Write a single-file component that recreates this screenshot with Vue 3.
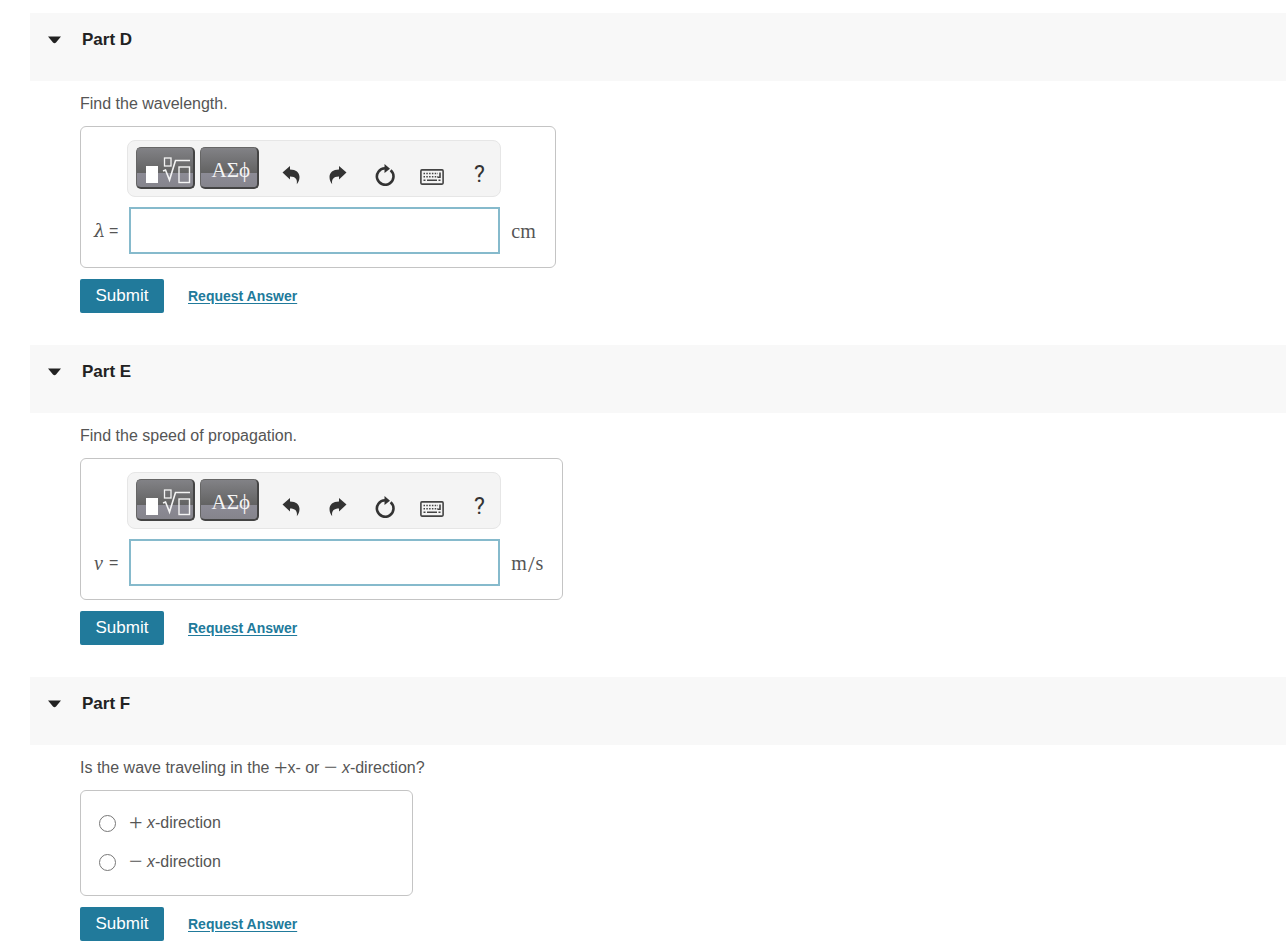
<script setup>
import { ref } from 'vue'

const parts = ref([
  { id: 'd', title: 'Part D', kind: 'math', prompt: 'Find the wavelength.', symbol: 'λ', unit: ['cm'], value: '', open: true },
  { id: 'e', title: 'Part E', kind: 'math', prompt: 'Find the speed of propagation.', symbol: 'v', unit: ['m', '/', 's'], value: '', open: true },
  { id: 'f', title: 'Part F', kind: 'choice', value: '', open: true }
])
const choices = [
  { id: 'plus', sign: '+' },
  { id: 'minus', sign: '−' }
]
</script>

<template>
  <main class="page">
    <section v-for="part in parts" :key="part.id" class="part">
      <h2 class="head">
        <button type="button" class="toggle" :aria-expanded="part.open" @click="part.open = !part.open">
          <svg class="caret" width="14" height="8" viewBox="0 0 14 8" aria-hidden="true"><path d="M0 0.500H13L8 6.600Q6.500 8 5 6.600Z" fill="#222" /></svg>
          <span>{{ part.title }}</span>
        </button>
      </h2>

      <div v-if="part.open" class="body">
        <p v-if="part.kind === 'math'" class="prompt">{{ part.prompt }}</p>
        <p v-else class="prompt">Is the wave traveling in the <span class="sign">+</span>x- or <span class="sign">−</span> <i>x</i>-direction?</p>

        <div v-if="part.kind === 'math'" class="box math">
          <div class="toolbar" role="toolbar" aria-label="Equation tools">
            <button type="button" class="key" aria-label="Templates">
              <svg width="46" height="30" viewBox="0 0 46 30" fill="none" stroke="#f4f4f4" aria-hidden="true">
                <rect x="1" y="11" width="12" height="17" fill="#fff" stroke="none" />
                <rect x="19.500" y="3" width="6.500" height="8" stroke-width="1.300" />
                <path d="M18 16L20.500 15L24.500 25L30.500 5.500H45" stroke-width="1.600" />
                <rect x="34" y="12" width="10.500" height="15.500" stroke-width="1.400" />
              </svg>
            </button>
            <button type="button" class="key greek" aria-label="Symbols">ΑΣϕ</button>
            <div class="tools">
              <button type="button" class="tool" aria-label="Undo">
                <svg width="18" height="20" viewBox="0 0 18 20" aria-hidden="true"><path d="M0.500 7.500L8 1V4.500C14 4.500 17.500 7.500 17.500 12C17.500 15 16.300 17.400 14.800 19.200C15.500 14.500 14 11.400 8 11.400V14.500Z" fill="#333" /></svg>
              </button>
              <button type="button" class="tool" aria-label="Redo">
                <svg width="18" height="20" viewBox="0 0 18 20" aria-hidden="true"><path d="M17.500 7.500L10 1V4.500C4 4.500 0.500 7.500 0.500 12C0.500 15 1.700 17.400 3.200 19.200C2.500 14.500 4 11.400 10 11.400V14.500Z" fill="#333" /></svg>
              </button>
              <button type="button" class="tool" aria-label="Reset">
                <svg width="20" height="22" viewBox="0 0 20 22" fill="none" aria-hidden="true"><path d="M15.600 6.200A8.300 8.300 0 1 1 10 4.200" stroke="#333" stroke-width="2.600" /><path d="M9.500 0L15 4.800L9.500 9Z" fill="#333" /></svg>
              </button>
              <button type="button" class="tool low" aria-label="Keyboard shortcuts">
                <svg width="24" height="16" viewBox="0 0 24 16" fill="none" stroke="#444" aria-hidden="true">
                  <rect x="0.900" y="0.900" width="22.200" height="14.200" rx="1" stroke-width="1.600" />
                  <path d="M3.500 4.500H18M3.500 7.800H18" stroke-width="1.500" stroke-dasharray="1.500 1.300" />
                  <path d="M3.500 11.300H5.500M18.500 11.300H20.500" stroke-width="1.500" />
                  <path d="M7 11.300H17M20 3.500V8.200H17.500" stroke-width="1.600" />
                </svg>
              </button>
              <button type="button" class="tool help" aria-label="Help">?</button>
            </div>
          </div>
          <label class="symbol" :for="'answer-' + part.id"><i :class="{ lambda: part.symbol === 'λ' }">{{ part.symbol }}</i><span>=</span></label>
          <input :id="'answer-' + part.id" v-model="part.value" class="answer" type="text" autocomplete="off">
          <span class="unit"><span v-for="piece in part.unit" :key="piece" :class="{ slash: piece === '/' }">{{ piece }}</span></span>
        </div>

        <div v-else class="box choices" role="radiogroup" aria-label="Direction of travel">
          <label v-for="choice in choices" :key="choice.id" class="choice">
            <input v-model="part.value" type="radio" name="direction" :value="choice.id">
            <span><span class="sign">{{ choice.sign }}</span> <i>x</i>-direction</span>
          </label>
        </div>

        <div class="actions">
          <button type="button" class="submit">Submit</button>
          <a class="request" href="#">Request Answer</a>
        </div>
      </div>
    </section>
  </main>
</template>

<style>
body { background: #fff; }
</style>

<style scoped>
.page {
  padding: 13px 0 4px 30px;
  font: 16px/20px "Liberation Sans", Arial, sans-serif;
  color: #555;
}
.page *, .page { box-sizing: border-box; }
.part { margin-bottom: 32px; }
.part:last-child { margin-bottom: 0; }
.head { margin: 0; height: 68px; padding: 17px 18px; background: #f8f8f8; font-size: 17px; line-height: 20px; }
.toggle {
  display: flex; align-items: center; gap: 20px; padding: 0; border: 0;
  background: none; color: #222; font: inherit; cursor: pointer;
}
.body { padding: 13px 20px 0 50px; }
.prompt { margin: 0 0 12px; line-height: 20px; height: 20px; }
.sign { font-family: "Liberation Serif", serif; font-size: 24px; line-height: 16px; vertical-align: -2px; }
.box { border: 1px solid #c4c4c4; border-radius: 6px; margin: 0; }
.math {
  display: grid; grid-template-columns: auto auto auto; align-items: center;
  width: fit-content; padding: 13px 19px 13px 13px;
}
.toolbar {
  grid-column: 2; display: flex; gap: 5px; height: 57px; padding: 6px 8px;
  margin: 0 0 10px; width: 374px;
  background: #f4f4f4; border: 1px solid #e6e6e6; border-radius: 8px;
}
.key {
  flex: none; width: 59px; height: 42px; padding: 0; display: flex; align-items: center; justify-content: center;
  border: 1px solid #666; border-right: 2px solid #444; border-bottom: 2px solid #444; border-radius: 5px;
  background: linear-gradient(#828286, #636363 63%, #8c8b96 64%, #85848c);
  color: #f4f4f4;
}
.greek { font: 21px/24px "Liberation Serif", "DejaVu Serif", serif; padding: 4px 0 0 3px; }
.key svg { margin: 4px 0 0 6px; }
.tools { display: flex; gap: 7px; margin-left: 7px; }
.tool {
  flex: none; display: flex; align-items: center; justify-content: center;
  width: 40px; height: 42px; padding: 14px 0 0; border: 0; background: none; color: #333;
}
.low { padding-top: 17px; }
.help { font: 23px/24px Roboto, sans-serif; padding-top: 14px; }
.symbol { grid-column: 1; grid-row: 2; display: flex; align-items: center; gap: 5px; padding-right: 9px; font-size: 16px; }
.symbol i { width: 10px; font: italic 20px/24px "Liberation Serif", serif; }
.symbol .lambda { font: italic 18px/24px "DejaVu Serif", serif; }
.answer {
  grid-column: 2; grid-row: 2; width: 371px; height: 47px; margin-left: 2px; padding: 4px 8px;
  border: 2px solid #86bacc; background: #fff; color: #333; font: 20px "Liberation Serif", serif; outline: none;
}
.unit { grid-column: 3; grid-row: 2; padding-left: 10px; font: 20px/24px "Liberation Serif", serif; }
.slash { margin: 0 1px; font-size: 24px; line-height: 20px; vertical-align: -2px; }
.choices { display: flex; flex-direction: column; gap: 19px; width: 333px; padding: 22px 18px 23px; }
.choice { display: flex; align-items: center; gap: 13px; height: 20px; }
.choice input {
  appearance: none; width: 17px; height: 17px; margin: 0; border: 1px solid #777; border-radius: 50%; background: #fff;
}
.choice input:checked { border: 5px solid #217a9b; }
.actions { display: flex; align-items: center; gap: 24px; margin-top: 11px; }
.submit {
  width: 84px; height: 34px; padding: 0; border: 0; border-radius: 2px; background: #217a9b; color: #fff;
  font: 17px/20px "Liberation Sans", Arial, sans-serif; cursor: pointer;
}
.request { color: #217a9b; font-weight: 700; font-size: 14px; line-height: 20px; text-underline-offset: 2px; }
</style>
